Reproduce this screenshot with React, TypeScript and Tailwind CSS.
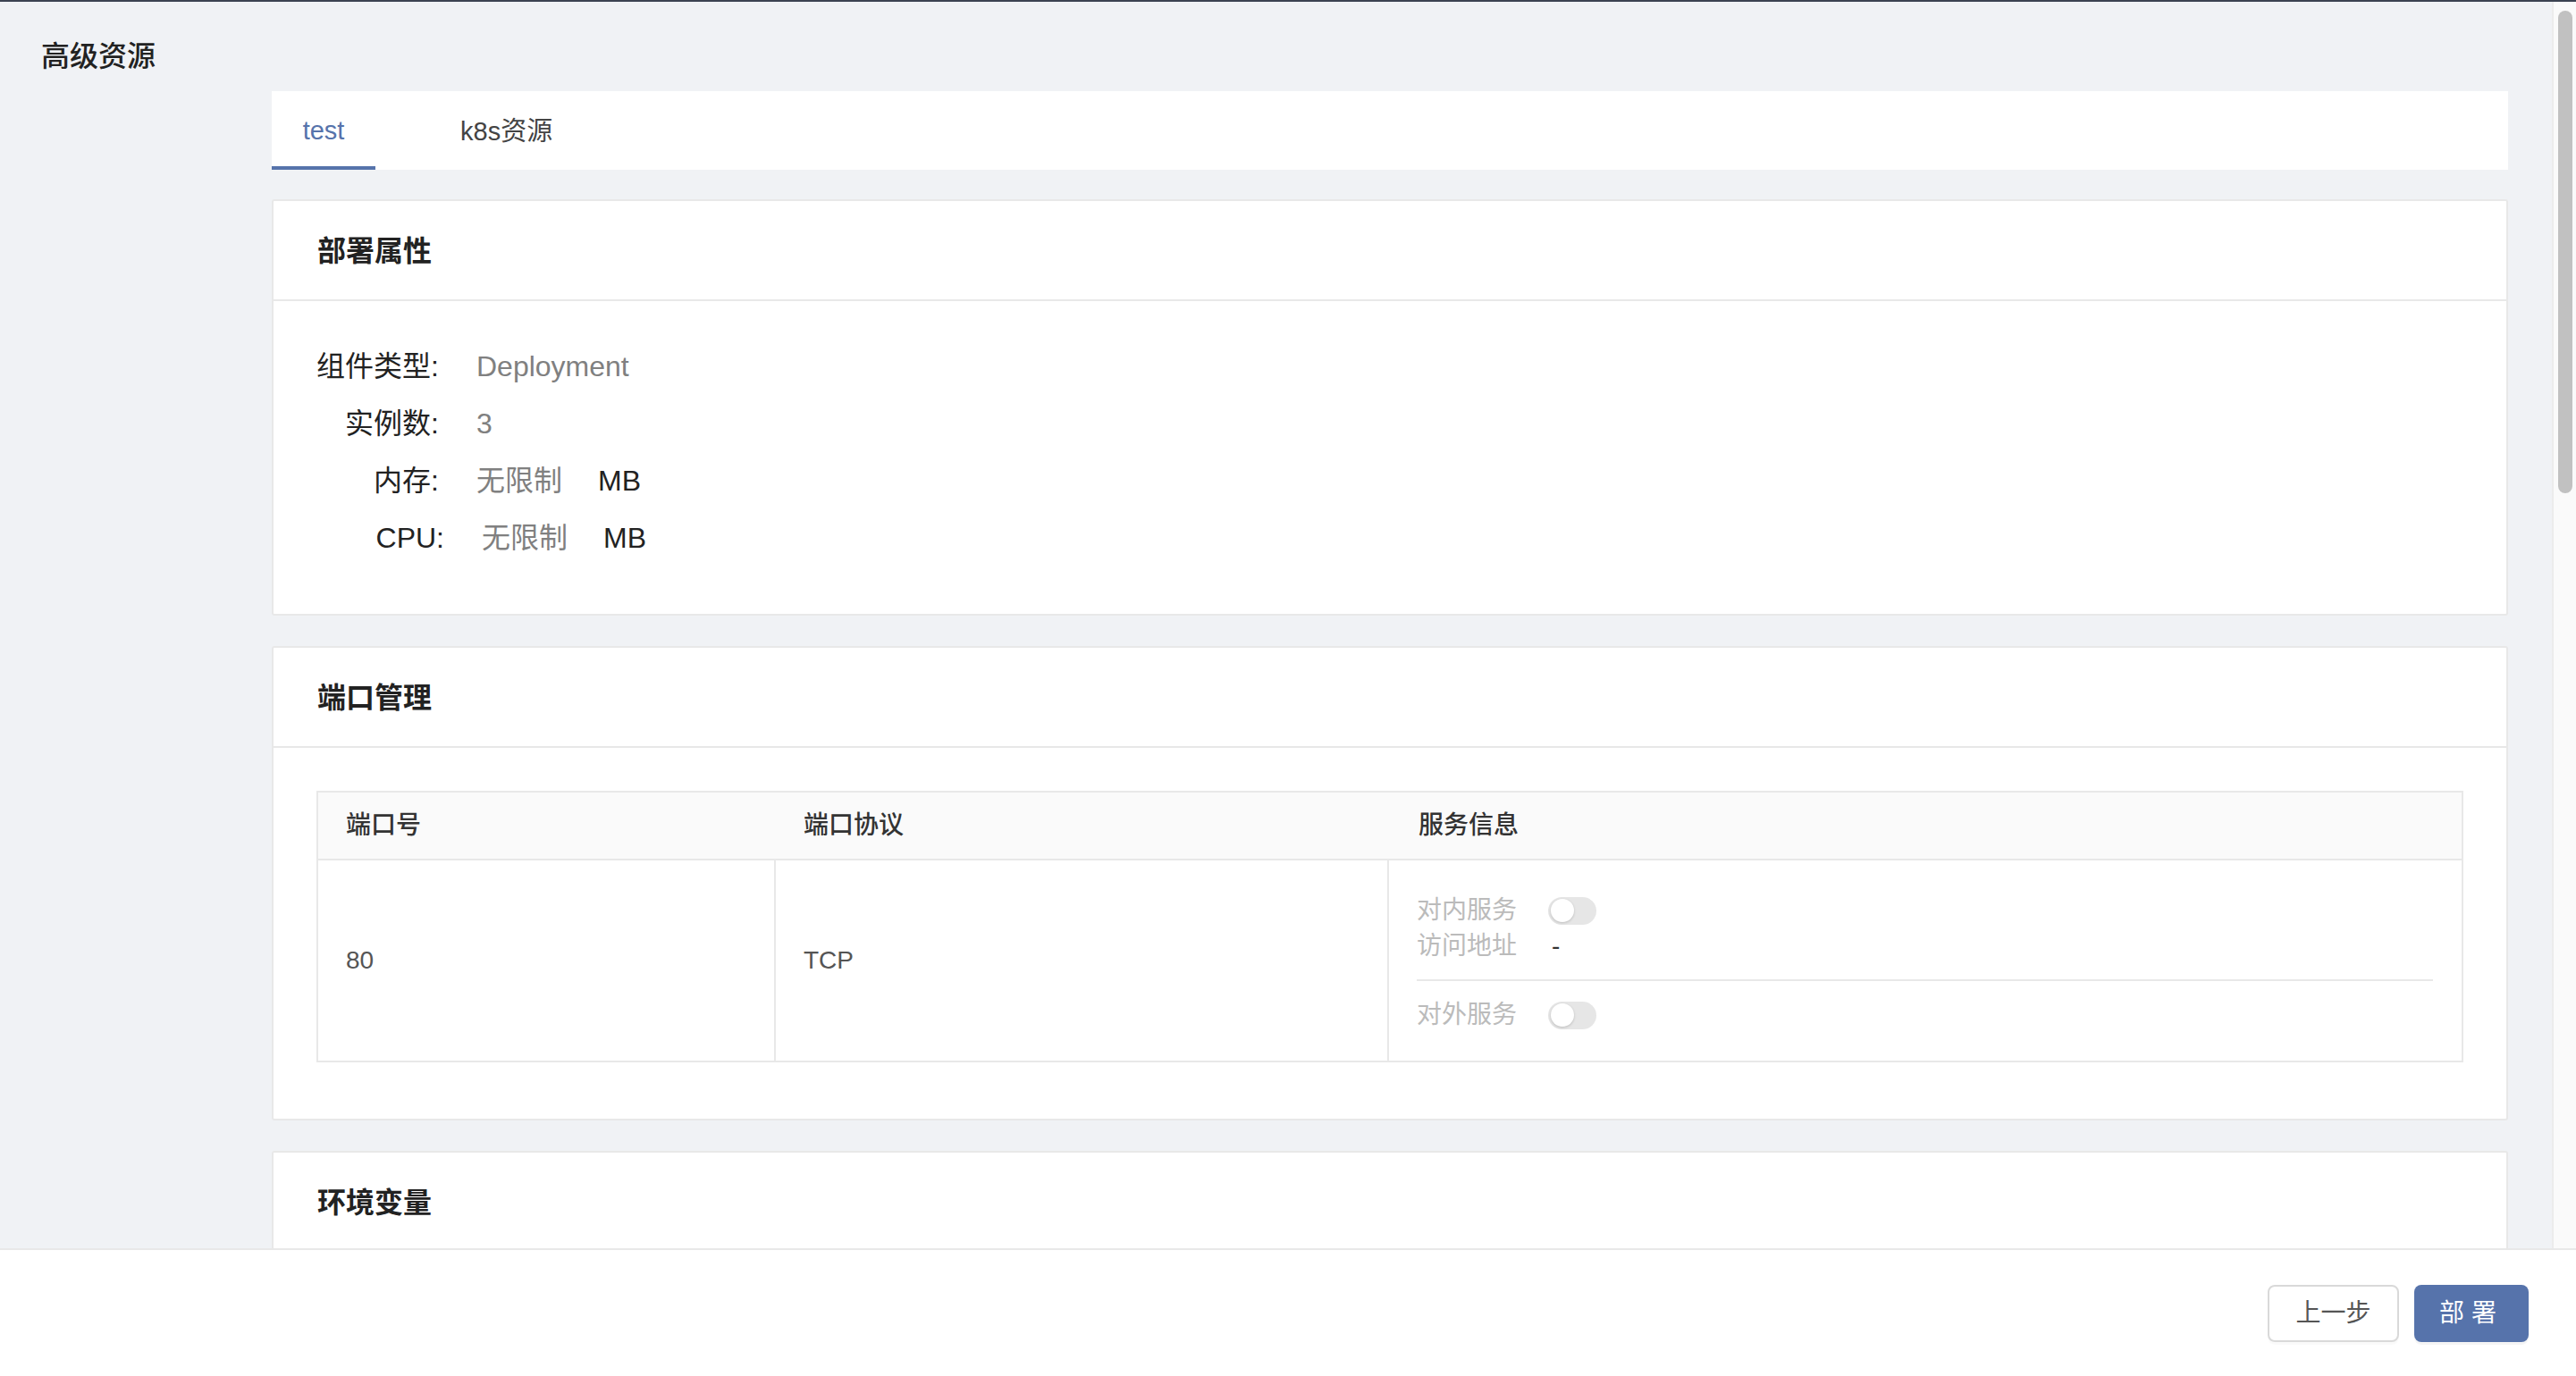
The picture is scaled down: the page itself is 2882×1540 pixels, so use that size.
import React from "react";

const font = "font-['Helvetica_Neue','Liberation_Sans','Noto_Sans_CJK_SC',sans-serif]";

function Toggle() {
  return (
    <span className="inline-flex h-[31px] w-[54px] items-center rounded-full bg-[#e6e6e6] px-[3px]">
      <span className="h-[26px] w-[26px] rounded-full bg-white shadow-[0_1px_3px_rgba(0,0,0,0.18)]" />
    </span>
  );
}

function CardHeader({ title }: { title: string }) {
  return (
    <div className="flex h-[112px] items-center border-b-2 border-[#e8e8e8] pl-[49px] pt-[2px]">
      <h3 className="text-[32px] font-semibold text-[#222]">{title}</h3>
    </div>
  );
}

const props = [
  { label: "组件类型:", value: "Deployment", unit: "", shift: "" },
  { label: "实例数:", value: "3", unit: "", shift: "" },
  { label: "内存:", value: "无限制", unit: "MB", shift: "" },
  { label: "CPU:", value: "无限制", unit: "MB", shift: "ml-[6px]" },
];

export default function App() {
  return (
    <div className={`flex h-screen w-full flex-col bg-[#f0f2f5] ${font}`}>
      {/* top line */}
      <div className="h-[2px] w-full bg-[#3b4251]" />

      <div className="flex min-h-0 flex-1">
        {/* main */}
        <div className="min-w-0 flex-1 overflow-hidden">
          <div className="pl-[46px] pt-[37px]">
            <h1 className="text-[32px] font-medium leading-[48px] text-[#222]">高级资源</h1>
          </div>

          <div className="ml-[304px] mr-[49px] mt-[15px]">
            {/* tabs */}
            <div className="flex h-[88px] bg-white">
              <div className="flex w-[116px] flex-col">
                <div className="flex flex-1 items-center justify-center pt-[6px] text-[29px] text-[#5673ab]">test</div>
                <div className="h-[4px] bg-[#5673ab]" />
              </div>
              <div className="ml-[63px] flex items-center px-[32px] pt-[4px] text-[29px] text-[#444]">k8s资源</div>
            </div>

            {/* 部署属性 */}
            <section className="mt-[33px] rounded-[3px] border-2 border-[#e8e8e8] bg-white">
              <CardHeader title="部署属性" />
              <div className="pb-[53px] pt-[41px]">
                {props.map((p) => (
                  <div key={p.label} className={`flex h-[64px] items-center text-[32px] ${p.shift}`}>
                    <span className="w-[185px] text-right text-[#222]">{p.label}</span>
                    <span className="ml-[42px] text-[#808080]">{p.value}</span>
                    {p.unit && <span className="ml-[40px] text-[#222]">{p.unit}</span>}
                  </div>
                ))}
              </div>
            </section>

            {/* 端口管理 */}
            <section className="mt-[34px] rounded-[3px] border-2 border-[#e8e8e8] bg-white">
              <CardHeader title="端口管理" />
              <div className="px-[48px] pb-[63px] pt-[48px]">
                <div className="border-2 border-[#e8e8e8] text-[28px]">
                  <div className="flex h-[76px] items-center border-b-2 border-[#e8e8e8] bg-[#fafafa] font-medium text-[#333]">
                    <div className="w-[512px] pl-[31px]">端口号</div>
                    <div className="w-[688px] pl-[31px]">端口协议</div>
                    <div className="flex-1 pl-[31px]">服务信息</div>
                  </div>
                  <div className="flex text-[#555]">
                    <div className="flex w-[512px] items-center border-r-2 border-[#e8e8e8] pl-[31px]">80</div>
                    <div className="flex w-[686px] items-center border-r-2 border-[#e8e8e8] pl-[31px]">TCP</div>
                    <div className="flex-1 pb-[31px] pl-[31px] pr-[32px] pt-[36px] text-[#bbb]">
                      <div className="flex h-[40px] items-center gap-[35px]">
                        <span>对内服务</span>
                        <Toggle />
                      </div>
                      <div className="flex h-[40px] items-center gap-[39px]">
                        <span>访问地址</span>
                        <span className="text-[#333]">-</span>
                      </div>
                      <div className="mt-[17px] h-[2px] bg-[#e8e8e8]" />
                      <div className="mt-[18px] flex h-[40px] items-center gap-[35px]">
                        <span>对外服务</span>
                        <Toggle />
                      </div>
                    </div>
                  </div>
                </div>
              </div>
            </section>

            {/* 环境变量 */}
            <section className="mt-[34px] h-[300px] rounded-[3px] border-2 border-[#e8e8e8] bg-white">
              <CardHeader title="环境变量" />
            </section>
          </div>
        </div>

        {/* scrollbar */}
        <div className="w-[27px] shrink-0 border-l-2 border-[#ececec] bg-[#fafafa] pl-[5px] pt-[10px]">
          <div className="h-[540px] w-[16px] rounded-full bg-[#c1c1c1]" />
        </div>
      </div>

      {/* footer */}
      <footer className="flex h-[143px] shrink-0 items-center justify-end gap-[17px] border-t-2 border-[#e8e8e8] bg-white pr-[53px]">
        <button className="h-[64px] w-[147px] rounded-[8px] border-2 border-[#d9d9d9] bg-white text-[28px] text-[#555] shadow-[0_3px_0_rgba(0,0,0,0.02)]">
          上一步
        </button>
        <button className="h-[64px] w-[128px] rounded-[8px] bg-[#5673ab] text-[28px] tracking-[8px] text-white shadow-[0_3px_0_rgba(0,0,0,0.04)]">
          部署
        </button>
      </footer>
    </div>
  );
}
